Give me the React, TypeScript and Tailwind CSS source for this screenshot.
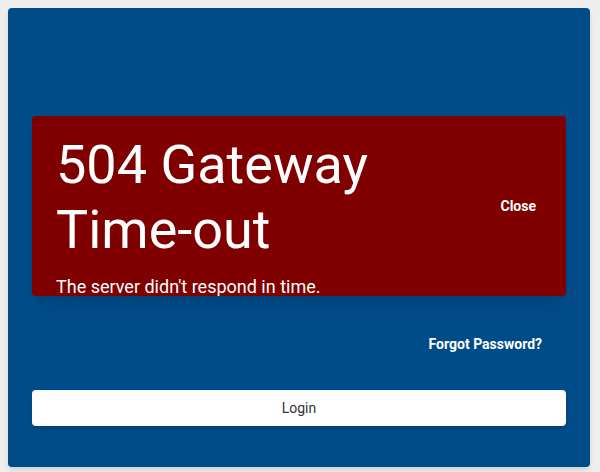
import React from 'react';

function App() {
  return (
    <div className="min-h-[472px] bg-[#eeeeee] pt-2 pl-2 font-['Roboto',sans-serif]">
      <div className="w-[582px] h-[459px] bg-[#004c89] rounded shadow-md px-6 pt-[108px] flex flex-col">
        <div className="h-[180px] bg-[#800000] rounded shadow-lg overflow-hidden flex items-center pl-6 pr-6">
          <div className="flex-1 self-start pt-4">
            <h1 className="w-[400px] text-[54px] leading-[65px] font-normal text-white">
              504 Gateway Time-out
            </h1>
            <p className="mt-[11px] text-[18px] leading-[27px] text-white">
              The server didn't respond in time.
            </p>
          </div>
          <button className="px-[6px] py-2 text-[14px] font-bold text-white">Close</button>
        </div>

        <div className="mt-[38px] flex justify-end pr-6">
          <button className="text-[14px] leading-5 font-bold text-white">Forgot Password?</button>
        </div>

        <button className="mt-[36px] h-9 w-full bg-white rounded shadow-md text-[14px] text-[#333333]">
          Login
        </button>
      </div>
    </div>
  );
}

export default App;
